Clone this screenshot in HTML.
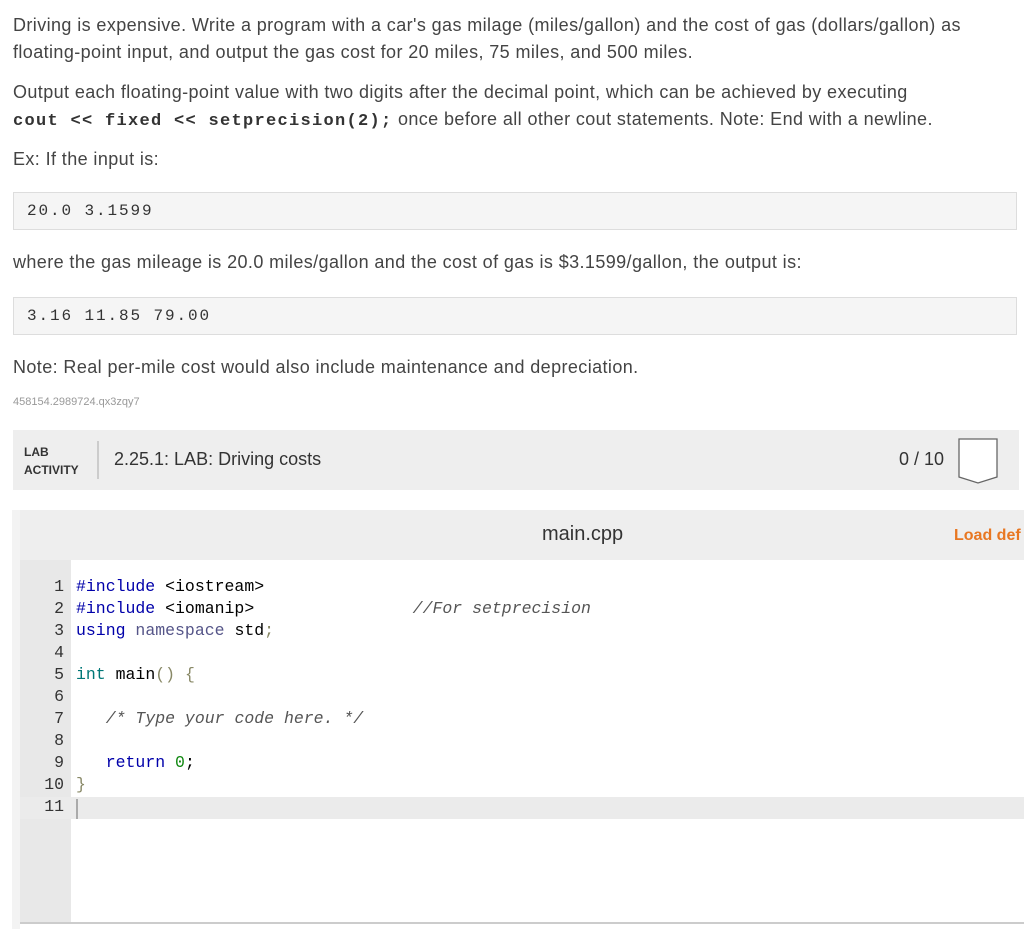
<!DOCTYPE html>
<html><head><style>
body{margin:0;width:1024px;height:929px;overflow:hidden;background:#fff;font-family:"Liberation Sans",sans-serif;color:#444;}
.t{position:absolute;left:13px;font-size:18px;white-space:nowrap;letter-spacing:0.4px}
.mono{font-family:"Liberation Mono",monospace}
.box{position:absolute;left:13px;width:1004px;height:37px;background:#f5f5f5;border:1px solid #ddd;font-family:"Liberation Mono",monospace;font-size:16px;color:#333;line-height:37px;padding-left:13px;box-sizing:border-box;letter-spacing:1.9px}
.code{position:absolute;left:0;font-family:"Liberation Mono",monospace;font-size:16.5px;white-space:pre;line-height:22px;color:#000}
</style></head><body>
<div class="t" style="top:15px">Driving is expensive. Write a program with a car's gas milage (miles/gallon) and the cost of gas (dollars/gallon) as</div>
<div class="t" style="top:42px">floating-point input, and output the gas cost for 20 miles, 75 miles, and 500 miles.</div>
<div class="t" style="top:82px">Output each floating-point value with two digits after the decimal point, which can be achieved by executing</div>
<div class="t" style="top:109px"><b class="mono" style="font-size:17px;color:#333;letter-spacing:1.3px">cout &lt;&lt; fixed &lt;&lt; setprecision(2);</b> once before all other cout statements. Note: End with a newline.</div>
<div class="t" style="top:149px">Ex: If the input is:</div>
<div class="box" style="top:192px;height:38px">20.0 3.1599</div>
<div class="t" style="top:252px">where the gas mileage is 20.0 miles/gallon and the cost of gas is $3.1599/gallon, the output is:</div>
<div class="box" style="top:297px;height:38px">3.16 11.85 79.00</div>
<div class="t" style="top:357px">Note: Real per-mile cost would also include maintenance and depreciation.</div>
<div class="t" style="top:396px;font-size:11px;color:#999;letter-spacing:0">458154.2989724.qx3zqy7</div>

<div style="position:absolute;left:13px;top:430px;width:1006px;height:60px;background:#eee"></div>
<div style="position:absolute;left:24px;top:443px;font-size:12px;font-weight:bold;color:#333;line-height:18px">LAB<br>ACTIVITY</div>
<div style="position:absolute;left:97px;top:441px;width:2px;height:38px;background:#ccc"></div>
<div style="position:absolute;left:114px;top:449px;font-size:18px;color:#333">2.25.1: LAB: Driving costs</div>
<div style="position:absolute;left:899px;top:449px;font-size:18px;color:#333">0 / 10</div>
<svg style="position:absolute;left:955px;top:437px" width="46" height="48"><path d="M4 2H42V40L23 46L4 40Z" fill="#fff" stroke="#666" stroke-width="1.3"/></svg>

<div style="position:absolute;left:12px;top:510px;width:8px;height:419px;background:#f3f3f3"></div>
<div style="position:absolute;left:20px;top:510px;width:1004px;height:50px;background:#eee"></div>
<div style="position:absolute;left:542px;top:523px;font-size:20px;color:#333">main.cpp</div>
<div style="position:absolute;left:954px;top:527px;font-size:16px;font-weight:bold;color:#e87722">Load def</div>
<div style="position:absolute;left:20px;top:560px;width:51px;height:362px;background:#e8e8e8"></div>
<div style="position:absolute;left:20px;top:922px;width:1004px;height:2px;background:#ccc"></div>
<div style="position:absolute;left:20px;top:797px;width:1004px;height:22px;background:#ebebeb"></div>
<div style="position:absolute;left:76px;top:799px;width:2px;height:20px;background:#aaa"></div>
<div class="code" style="top:576px;left:20px;width:44px;text-align:right;color:#333">1
2
3
4
5
6
7
8
9
10
11</div>
<div class="code" style="top:576px;left:76px"><span style="color:#00a">#include</span> &lt;iostream&gt;
<span style="color:#00a">#include</span> &lt;iomanip&gt;                <i style="color:#555">//For setprecision</i>
<span style="color:#00a">using</span> <span style="color:#558">namespace</span> std<span style="color:#886">;</span>

<span style="color:#077">int</span> main<span style="color:#886">()</span> <span style="color:#886">{</span>

   <i style="color:#555">/* Type your code here. */</i>

   <span style="color:#00a">return</span> <span style="color:#181">0</span>;
<span style="color:#886">}</span>
</div>
</body></html>
